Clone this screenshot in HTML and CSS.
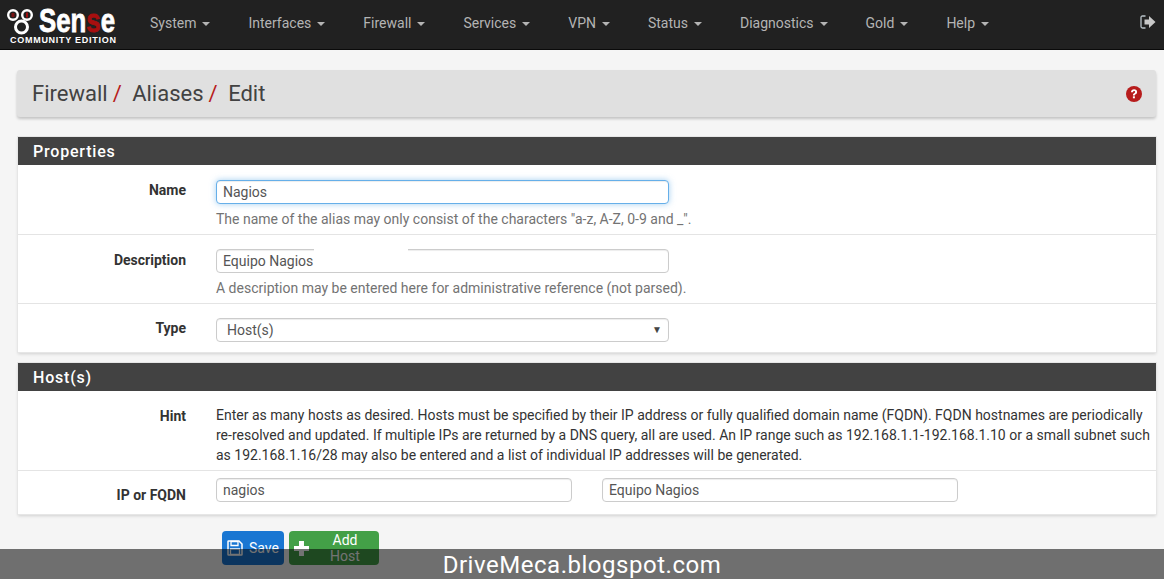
FILE: index.html
```html
<!DOCTYPE html>
<html lang="en">
<head>
<meta charset="utf-8">
<title>Firewall / Aliases / Edit</title>
<link rel="stylesheet" href="styles.css">
</head>
<body>
<nav class="navbar">
  <a class="brand" href="#">
    <svg class="logo" width="118" height="44" viewBox="0 0 118 44">
      <g fill="none" stroke="#fff">
        <circle cx="13" cy="13" r="4.800" stroke-width="2.400"/>
        <circle cx="27" cy="13" r="4.800" stroke-width="2.400"/>
        <circle cx="21.500" cy="25" r="6" stroke-width="3"/>
      </g>
      <rect x="11.500" y="11" width="3" height="4" fill="#7a1414"/>
      <rect x="26" y="10.500" width="2" height="5" fill="#a01010"/>
      <text class="logo-word" x="39" y="30" textLength="76" lengthAdjust="spacingAndGlyphs">Sen<tspan class="logo-red">s</tspan>e</text>
      <text class="logo-sub" x="10" y="41" textLength="106" lengthAdjust="spacing">COMMUNITY EDITION</text>
    </svg>
  </a>
  <ul class="menu">
    <li>System<span class="caret"></span></li>
    <li>Interfaces<span class="caret"></span></li>
    <li>Firewall<span class="caret"></span></li>
    <li>Services<span class="caret"></span></li>
    <li>VPN<span class="caret"></span></li>
    <li>Status<span class="caret"></span></li>
    <li>Diagnostics<span class="caret"></span></li>
    <li>Gold<span class="caret"></span></li>
    <li>Help<span class="caret"></span></li>
  </ul>
  <svg class="logout" width="16" height="14" viewBox="0 0 16 14">
    <path d="M5.500 1H2.500Q1 1 1 2.500v9Q1 13 2.500 13h3" fill="none" stroke="#b9c3c9" stroke-width="1.300"/>
    <path d="M4.500 4.500H9V1l6.500 6L9 13V9.500H4.500z" fill="#c8c8c8"/>
  </svg>
</nav>

<main class="page">
  <header class="crumbs">
    <h1 class="crumb-line">
      <span>Firewall</span><span class="slash">/</span>
      <span>Aliases</span><span class="slash">/</span>
      <span>Edit</span>
    </h1>
    <svg class="help" width="16" height="16" viewBox="0 0 16 16">
      <circle cx="8" cy="8" r="8" fill="#b71c1c"/>
      <path d="M5 6.200C5 4.300 6.300 3.300 8.100 3.300c1.800 0 3 1 3 2.600 0 1.200-.7 1.800-1.500 2.300-.6.400-.8.600-.8 1.200H6.900c0-1.200.4-1.700 1.200-2.200.6-.4 1-.7 1-1.200 0-.6-.4-1-1-1-.7 0-1.100.4-1.200 1.200z" fill="#fff"/>
      <rect x="6.900" y="10.300" width="2" height="2" fill="#fff"/>
    </svg>
  </header>

  <section class="panel panel-props">
    <h2 class="panel-title">Properties</h2>
    <div class="row row-name">
      <label class="row-label">Name</label>
      <div class="row-body">
        <div class="field field-focus">Nagios</div>
        <p class="help-text">The name of the alias may only consist of the characters "a-z, A-Z, 0-9 and _".</p>
      </div>
    </div>
    <div class="row row-desc">
      <label class="row-label">Description</label>
      <div class="row-body">
        <div class="field field-notched">Equipo Nagios<span class="notch"></span></div>
        <p class="help-text">A description may be entered here for administrative reference (not parsed).</p>
      </div>
    </div>
    <div class="row row-last row-type">
      <label class="row-label">Type</label>
      <div class="row-body">
        <div class="field field-select">Host(s)<span class="select-arrow">▼</span></div>
      </div>
    </div>
  </section>

  <section class="panel panel-hosts">
    <h2 class="panel-title">Host(s)</h2>
    <div class="row row-hint">
      <label class="row-label">Hint</label>
      <div class="row-body hint">Enter as many hosts as desired. Hosts must be specified by their IP address or fully qualified domain name (FQDN). FQDN hostnames are periodically re-resolved and updated. If multiple IPs are returned by a DNS query, all are used. An IP range such as 192.168.1.1-192.168.1.10 or a small subnet such as 192.168.1.16/28 may also be entered and a list of individual IP addresses will be generated.</div>
    </div>
    <div class="row row-last row-ip">
      <label class="row-label">IP or FQDN</label>
      <div class="host-fields">
        <div class="field field-host">nagios</div>
        <div class="field field-host">Equipo Nagios</div>
      </div>
    </div>
  </section>

  <div class="actions">
    <button class="btn btn-save" type="button">
      <svg width="16" height="16" viewBox="0 0 16 16">
        <path d="M1.500 1H12l3 3v10.500q0 .500-.500.500h-13q-.500 0-.500-.500v-13q0-.500.500-.500z" fill="none" stroke="#fff" stroke-width="1.500"/>
        <path d="M4 1.500h7v4H4z" fill="none" stroke="#fff" stroke-width="1.300"/>
        <path d="M3.500 9h9v5.500h-9z" fill="none" stroke="#fff" stroke-width="1.300"/>
      </svg>Save
    </button>
    <button class="btn btn-add" type="button">
      <svg width="15" height="15" viewBox="0 0 15 15">
        <path d="M5 0h5v5h5v5h-5v5H5v-5H0V5h5z" fill="#fff"/>
      </svg>Add Host
    </button>
  </div>
</main>

<div class="watermark">DriveMeca.blogspot.com</div>
</body>
</html>
```

FILE: styles.css
```css
* { box-sizing: border-box; }
html, body { margin: 0; height: 579px; overflow: hidden; }
body {
  background: #f5f5f5;
  font-family: Roboto, "Liberation Sans", sans-serif;
  font-size: 14px;
  color: #333;
}
.navbar {
  display: flex;
  align-items: center;
  height: 50px;
  background: #212121;
  border-bottom: 1px solid #0a0a0a;
  padding-left: 0;
}
.brand { display: block; width: 131px; height: 49px; flex: none; padding-top: 2px; }
.logo { display: block; overflow: visible; }
.logo-word {
  font-family: "Liberation Sans", sans-serif;
  font-weight: 700;
  font-size: 34px;
  fill: #fff;
  stroke: #fff;
  stroke-width: .8px;
}
.logo-red { fill: #a80f0f; stroke: #a80f0f; }
.logo-sub {
  font-family: "Liberation Sans", sans-serif;
  font-weight: 700;
  font-size: 9px;
  fill: #fff;
}
.menu {
  display: flex;
  list-style: none;
  margin: 0 0 4px;
  padding: 0;
  color: #b4b4b4;
  font-size: 14px;
}
.menu li { padding: 0 19px; white-space: nowrap; line-height: 20px; }
.caret {
  display: inline-block;
  width: 0;
  height: 0;
  margin-left: 6px;
  vertical-align: middle;
  border-top: 4px solid #b4b4b4;
  border-left: 4px solid transparent;
  border-right: 4px solid transparent;
}
.logout { margin-left: auto; margin-right: 8px; margin-top: -6px; }

.page { padding: 20px 8px 0 18px; }
.crumbs {
  display: flex;
  align-items: center;
  justify-content: space-between;
  height: 47px;
  margin-left: -1px;
  padding: 0 14px 0 15px;
  background: #e0e0e0;
  border-radius: 3px;
  box-shadow: 0 2px 3px rgba(0, 0, 0, .2);
}
.crumb-line {
  margin: 0;
  font-size: 22px;
  font-weight: 400;
  line-height: 30px;
  color: #424242;
  white-space: nowrap;
}
.slash { color: #b71c1c; margin: 0 5px 0 5px; }
.help { flex: none; }

.panel {
  background: #fff;
  box-shadow: 0 0 0 1px #e6e6e6, 0 2px 3px rgba(0, 0, 0, .15);
  margin-bottom: 11px;
}
.panel-props { margin-top: 20px; }
.panel-title {
  margin: 0;
  height: 28px;
  padding: 0 15px;
  background: #424242;
  color: #fff;
  font-size: 16px;
  font-weight: 500;
  letter-spacing: .8px;
  line-height: 30px;
}
.row {
  display: flex;
  border-bottom: 1px solid #e4e4e4;
  height: 69px;
  padding-top: 15px;
}
.row-last { border-bottom: 0; }
.row-name { height: 70px; }
.row-desc { padding-top: 14px; }
.row-desc .row-label { padding-top: 1px; }
.row-type { height: 48px; padding-top: 14px; }
.row-hint { height: 80px; padding-top: 14px; }
.row-hint .row-label { padding-top: 1px; }
.row-ip { height: 43px; padding-top: 7px; }
.row-label {
  width: 168px;
  flex: none;
  text-align: right;
  font-weight: 700;
  line-height: 20px;
  color: #333;
}
.row-ip .row-label { padding-top: 7px; }
.row-body { margin-left: 30px; flex: 1; min-width: 0; }
.field {
  position: relative;
  height: 24px;
  padding: 0 6px;
  width: 453px;
  background: #fff;
  border: 1px solid #ccc;
  border-radius: 4px;
  box-shadow: inset 0 1px 1px rgba(0, 0, 0, .075);
  line-height: 22px;
  color: #555;
}
.field-focus {
  border-color: #66afe9;
  box-shadow: inset 0 1px 1px rgba(0, 0, 0, .075), 0 0 6px rgba(102, 175, 233, .6);
}
.notch {
  position: absolute;
  left: 97px;
  top: -2px;
  width: 94px;
  height: 4px;
  background: #fff;
}
.field-select { padding-left: 10px; }
.select-arrow {
  position: absolute;
  right: 6px;
  top: 0;
  font-size: 10px;
  color: #444;
}
.help-text { margin: 5px 0 0; line-height: 20px; color: #737373; }
.hint { line-height: 20px; margin-top: 0; padding-right: 5px; color: #333; }
.host-fields { display: flex; gap: 30px; margin-left: 30px; }
.field-host { width: 356px; }
.actions { display: flex; gap: 5px; margin-left: 204px; margin-top: 17px; }
.btn {
  display: flex;
  align-items: center;
  height: 34px;
  padding: 0 5px;
  gap: 6px;
  border: 0;
  border-radius: 4px;
  color: #fff;
  font: 14px Roboto, "Liberation Sans", sans-serif;
}
.btn-save { background: #1976d2; width: 62px; }
.btn-add { background: #43a047; width: 90px; gap: 7px; }
.watermark {
  position: absolute;
  left: 0;
  right: 0;
  top: 549px;
  height: 30px;
  background: rgba(0, 0, 0, .55);
  color: #fff;
  text-align: center;
  font-size: 24px;
  line-height: 32px;
  letter-spacing: .53px;
}
```
